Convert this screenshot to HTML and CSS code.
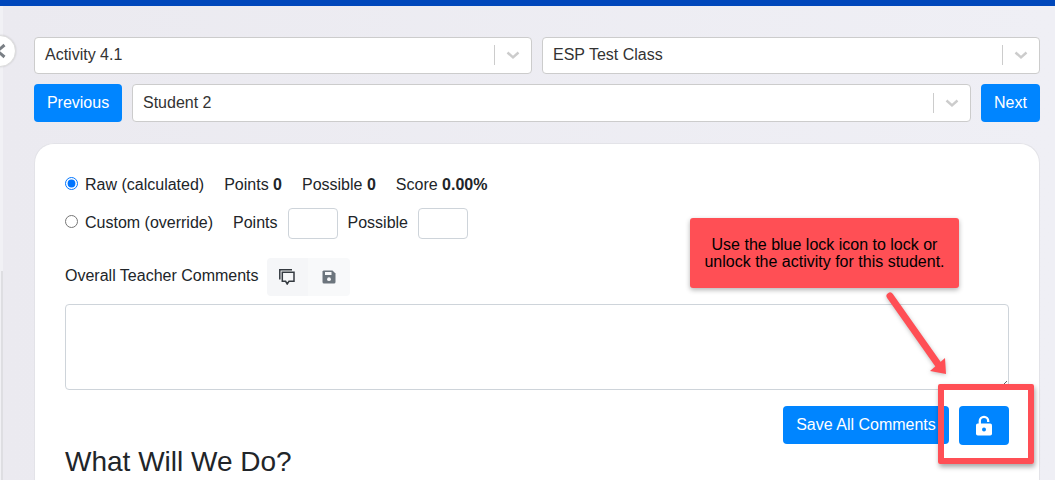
FILE: index.html
```html
<!DOCTYPE html>

<html>
    <head>
        <title>Grading</title>
        <link rel="stylesheet" href="styles.css">
    </head>

    <body>
        <div class="topbar"></div>
        <div class="sidebar-edge"></div>
        <div class="collapse-btn">
            <svg width="14" height="16" viewBox="0 0 14 16"><path d="M9.5 2 L2.5 8 L9.5 14" fill="none" stroke="#7a7f85" stroke-width="3"/></svg>
        </div>

        <div class="page">
            <div class="select-row">
                <div class="select">
                    <span class="select-value">Activity 4.1</span>
                    <span class="select-sep"></span>
                    <svg class="select-arrow" width="20" height="20" viewBox="0 0 20 20"><path d="M4.5 7.5 L10 12.5 L15.5 7.5" fill="none" stroke="#cccccc" stroke-width="2.4"/></svg>
                </div>
                <div class="select">
                    <span class="select-value">ESP Test Class</span>
                    <span class="select-sep"></span>
                    <svg class="select-arrow" width="20" height="20" viewBox="0 0 20 20"><path d="M4.5 7.5 L10 12.5 L15.5 7.5" fill="none" stroke="#cccccc" stroke-width="2.4"/></svg>
                </div>
            </div>

            <div class="select-row student-row">
                <button class="btn btn-prev">Previous</button>
                <div class="select">
                    <span class="select-value">Student 2</span>
                    <span class="select-sep"></span>
                    <svg class="select-arrow" width="20" height="20" viewBox="0 0 20 20"><path d="M4.5 7.5 L10 12.5 L15.5 7.5" fill="none" stroke="#cccccc" stroke-width="2.4"/></svg>
                </div>
                <button class="btn btn-next">Next</button>
            </div>

            <div class="card">
                <div class="score-row">
                    <input class="radio" type="radio" name="score" checked>
                    <span class="radio-label">Raw (calculated)</span>
                    <span class="score-item">Points <b>0</b></span>
                    <span class="score-item">Possible <b>0</b></span>
                    <span class="score-item">Score <b>0.00%</b></span>
                </div>

                <div class="score-row custom-row">
                    <input class="radio" type="radio" name="score">
                    <span class="radio-label">Custom (override)</span>
                    <span class="custom-label">Points</span>
                    <input class="small-input" type="text">
                    <span class="custom-label">Possible</span>
                    <input class="small-input" type="text">
                </div>

                <div class="comments-head">
                    <span class="comments-label">Overall Teacher Comments</span>
                    <div class="icon-group">
                        <span class="icon-btn icon-btn-first">
                            <svg width="16" height="16" viewBox="0 0 16 16"><path d="M0.8 10.5 V0.8 H13" fill="none" stroke="#343a40" stroke-width="1.5"/><path d="M3.3 3.3 H15 V12.3 H10 L8.2 15 L6.6 12.3 H3.3 Z" fill="none" stroke="#343a40" stroke-width="1.5"/></svg>
                        </span>
                        <span class="icon-btn">
                            <svg width="14" height="14" viewBox="0 0 14 14"><path d="M1.5 0.5 H10.5 L13.5 3.5 V12 A1.5 1.5 0 0 1 12 13.5 H2 A1.5 1.5 0 0 1 0.5 12 V1.5 Z" fill="#6c757d"/><rect x="3" y="2" width="6.5" height="3" fill="#f8f9fa"/><circle cx="7" cy="9.2" r="1.9" fill="#f8f9fa"/></svg>
                        </span>
                    </div>
                </div>

                <textarea class="comment-box"></textarea>

                <div class="actions">
                    <button class="btn btn-save">Save All Comments</button>
                    <button class="btn btn-lock">
                        <svg width="16" height="21" viewBox="0 0 16 21"><path d="M3.8 9 V6 A4.2 4.2 0 0 1 12.2 6 V7" fill="none" stroke="#fff" stroke-width="2.3"/><rect x="0" y="8.5" width="16" height="12" rx="1.8" fill="#fff"/><circle cx="8" cy="14.5" r="2" fill="#0085ff"/></svg>
                    </button>
                </div>

                <h2 class="section-title">What Will We Do?</h2>
            </div>
        </div>

        <!-- annotation drawn over the screenshot -->
        <div class="callout">Use the blue lock icon to lock or unlock the activity for this student.</div>
        <svg class="callout-arrow" width="70" height="100" viewBox="0 0 70 100">
            <path d="M5 6 L55 77" fill="none" stroke="#ff4f55" stroke-width="7" stroke-linecap="round"/>
            <path d="M60 68 L61 84 L45 81 Z" fill="#ff4f55"/>
        </svg>
        <div class="callout-box"></div>
    </body>
</html>
```

FILE: styles.css
```css
* {box-sizing: border-box}

body {
  margin: 0;
  height: 480px;
  overflow: hidden;
  font-family: "Liberation Sans", Arial, sans-serif;
  font-size: 16px;
  color: #212529;
  background: linear-gradient(to right, #ebeaf0, #efeff5);
}

.topbar {
  height: 6px;
  background-color: #0047bb;
}

.sidebar-edge {
  position: absolute;
  left: 0;
  top: 6px;
  width: 3px;
  height: 474px;
  background-color: #f1f1f5;
}

/* lower part of the sidebar is darker */
.sidebar-edge::after {
  content: "";
  position: absolute;
  left: 1px;
  top: 265px;
  width: 2px;
  height: 209px;
  background-color: #dedee2;
}

.collapse-btn {
  position: absolute;
  left: -16px;
  top: 35px;
  width: 32px;
  height: 32px;
  border-radius: 50%;
  background: #fff;
  border: 1px solid #dddddd;
  box-shadow: 0 0 2px rgba(0, 0, 0, 0.15);
  display: flex;
  align-items: center;
  justify-content: center;
  padding-left: 4px;
}

.page {
  padding: 31px 15px 0 34px;
}

.select-row {
  display: flex;
  gap: 10px;
  height: 37px;
}

.student-row {
  margin-top: 10px;
  height: 38px;
}

.select {
  flex: 1;
  display: flex;
  align-items: center;
  background: #fff;
  border: 1px solid #cccccc;
  border-radius: 4px;
  padding: 0 8px 1px 10px;
  color: #333333;
}

.student-row .select {
  padding-bottom: 0;
}

.select-value {
  flex: 1;
}

.select-sep {
  width: 1px;
  height: 20px;
  background-color: #cccccc;
  margin-right: 8px;
}

.select-arrow {
  display: block;
}

.btn {
  border: none;
  border-radius: 4px;
  background-color: #0085ff;
  color: #fff;
  font-family: inherit;
  font-size: 16px;
}

.btn-prev {
  width: 88px;
}

.btn-next {
  width: 59px;
}

.card {
  margin-top: 21px;
  height: 337px;
  background: #fff;
  border: 1px solid #e3e3e8;
  border-bottom: none;
  border-radius: 20px 20px 0 0;
  padding: 30px 30px 0;
}

.score-row {
  display: flex;
  align-items: center;
  height: 22px;
}

.radio {
  width: 13px;
  height: 13px;
  margin: -3px 7px 0 0;
}

.radio-label {
  margin-right: 20px;
}

.score-item {
  margin-right: 20px;
}

.custom-row {
  height: 32px;
  margin-top: 11px;
}

.custom-label {
  margin-right: 10px;
}

.small-input {
  width: 50px;
  height: 31px;
  border: 1px solid #ced4da;
  border-radius: 4px;
  margin-right: 10px;
}

.comments-head {
  display: flex;
  align-items: center;
  margin-top: 19px;
  height: 38px;
}

.comments-label {
  padding-bottom: 2px;
}

.icon-group {
  display: flex;
  margin-left: 8px;
}

.icon-btn {
  width: 41.5px;
  height: 38px;
  display: flex;
  align-items: center;
  justify-content: center;
  background-color: #f8f9fa;
}

.icon-btn-first {
  border-radius: 4px 0 0 4px;
  background-color: #f5f6f8;
}

.icon-btn:last-child {
  border-radius: 0 4px 4px 0;
}

.comment-box {
  display: block;
  width: 100%;
  height: 86px;
  margin-top: 8px;
  border: 1px solid #ced4da;
  border-radius: 4px;
}

.actions {
  display: flex;
  justify-content: flex-end;
  align-items: flex-start;
  gap: 10px;
  margin-top: 16px;
}

.btn-save {
  width: 166px;
  height: 38px;
}

.btn-lock {
  width: 50px;
  height: 39px;
  display: flex;
  align-items: center;
  justify-content: center;
}

.section-title {
  margin: 0;
  font-size: 28px;
  font-weight: 500;
  line-height: 34px;
}

.callout {
  position: absolute;
  left: 690px;
  top: 218px;
  width: 269px;
  height: 70px;
  padding: 18px 10px 0;
  border-radius: 3px;
  background-color: #ff4f55;
  box-shadow: 0 2px 5px rgba(0, 0, 0, 0.3);
  color: #000;
  font-size: 16px;
  line-height: 17px;
  text-align: center;
}

.callout-arrow {
  position: absolute;
  left: 885px;
  top: 290px;
  filter: drop-shadow(0 1px 2px rgba(0, 0, 0, 0.25));
}

.callout-box {
  position: absolute;
  left: 938px;
  top: 384px;
  width: 96px;
  height: 80px;
  border: 6px solid #ff4f55;
  border-radius: 2px;
  box-shadow: 1px 3px 5px rgba(0, 0, 0, 0.35);
}
```
